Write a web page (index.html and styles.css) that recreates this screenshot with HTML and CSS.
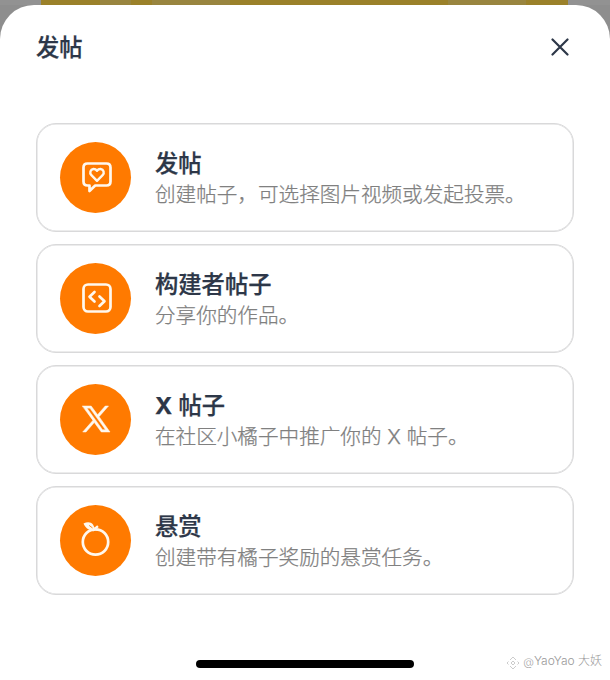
FILE: index.html
```html
<!DOCTYPE html>
<html lang="zh-CN">
<head>
<meta charset="utf-8">
<title>发帖</title>
<link rel="stylesheet" href="styles.css">
</head>
<body>
<div class="backdrop"></div>
<main class="sheet">
  <header class="header">
    <h1 class="heading">发帖</h1>
    <svg class="close" viewBox="0 0 18 18"><path d="M1.500 1.500l15 15M16.500 1.500l-15 15"/></svg>
  </header>
  <section class="options">
    <article class="card">
      <div class="badge">
        <svg class="icon" viewBox="0 0 36 36"><path d="M8.500 4.500h19q4 0 4 4v14q0 4-4 4h-11.300L10.500 32v-5.500h-2q-4 0-4-4v-14q0-4 4-4z"/><path class="thin" d="M18 21.800l-5.600-5.600c-2.200-2.200-1-5.900 2-6.200 1.500-.1 2.700.6 3.600 1.800.9-1.200 2.100-1.900 3.600-1.800 3 .3 4.200 4 2 6.200z"/></svg>
      </div>
      <div class="text"><h2 class="title">发帖</h2><p class="desc">创建帖子，可选择图片视频或发起投票。</p></div>
    </article>
    <article class="card">
      <div class="badge">
        <svg class="icon" viewBox="0 0 36 36"><rect x="4.500" y="4.500" width="27" height="27" rx="4.500"/><path d="M15.500 12l-5 4.700 5 4.800M20.500 16.500l5 4.700-5 4.800"/></svg>
      </div>
      <div class="text"><h2 class="title">构建者帖子</h2><p class="desc">分享你的作品。</p></div>
    </article>
    <article class="card">
      <div class="badge">
        <svg class="icon solid" viewBox="0 0 36 36"><path fill-rule="evenodd" d="M4.500 5h8.700l6.400 8.700L27.200 5h3.300L21.100 15.700 32 31h-8.700l-7-9.500L8 31H4.700l10.100-11.500zM9 7.300L24.500 28.700h3L12 7.300z"/></svg>
      </div>
      <div class="text"><h2 class="title"><span class="latin">X</span> 帖子</h2><p class="desc">在社区小橘子中推广你的 X 帖子。</p></div>
    </article>
    <article class="card">
      <div class="badge">
        <svg class="icon fruit" viewBox="0 0 36 36"><circle cx="17.500" cy="20" r="12.700"/><path class="leaf" d="M5.500 1.500C9.500-.4 13 .1 15 2.500l1.500 3 2.700-2.300 1.500 1.800-2.200 2 1.700 1.700-3.200-.3-2 1.100-1.200-1.400C10.200 8.400 7.500 5.500 5.500 1.500z"/><path class="vein" d="M11.500 3.700l2.700 2"/></svg>
      </div>
      <div class="text"><h2 class="title">悬赏</h2><p class="desc">创建带有橘子奖励的悬赏任务。</p></div>
    </article>
  </section>
  <div class="home"></div>
</main>
<div class="watermark">
  <svg class="mark" viewBox="0 0 14 14"><path d="M4 4l3-3 3 3M4 10l3 3 3-3M2.500 5.500L1 7l1.500 1.500M11.500 5.500L13 7l-1.500 1.500M7 5l2 2-2 2-2-2z"/></svg>
  <span class="at">@</span><span class="author">YaoYao 大妖</span>
</div>
</body>
</html>
```
FILE: styles.css
```css
* { box-sizing: border-box; }
body {
  margin: 0;
  height: 680px;
  overflow: hidden;
  background: #8e8e8e;
  font-family: Inter, "Noto Sans CJK SC", sans-serif;
  color: #2d3748;
}
.backdrop {
  height: 5px;
  background: linear-gradient(90deg, #929292 41px, #9b812a 41px 100px, #99853f 100px 131px, #9b812a 131px 152px, #99853f 152px 230px, #9b812a 230px 448px, #99853f 448px 526px, #9b812a 526px 568px, #929292 568px);
}
.sheet {
  height: 675px;
  padding: 0 36px;
  background: #fff;
  border-radius: 34px 34px 0 0;
  display: flex;
  flex-direction: column;
}
.header {
  height: 84px;
  display: flex;
  justify-content: space-between;
  align-items: center;
}
.heading, .title {
  margin: 0;
  font-size: 23.3px;
  line-height: 32px;
  font-weight: 500;
  -webkit-text-stroke: .25px;
}
.heading { padding-top: 2px; }
.latin { font-weight: 700; }
.close {
  width: 18px;
  height: 18px;
  margin-right: 5px;
  fill: none;
  stroke: #2d3748;
  stroke-width: 2.2;
  stroke-linecap: round;
}
.options {
  margin-top: 34px;
  display: flex;
  flex-direction: column;
  gap: 12px;
}
.card {
  height: 109px;
  padding-left: 23px;
  border: 1px solid #d9d9da;
  border-radius: 20px;
  box-shadow: inset 0 0 0 .5px #d9d9da;
  display: flex;
  align-items: center;
  gap: 24px;
}
.badge {
  width: 71px;
  height: 71px;
  border-radius: 50%;
  background: #ff7a00;
  display: flex;
  align-items: center;
  justify-content: center;
}
.icon {
  width: 36px;
  height: 36px;
  margin-left: 2px;
  margin-bottom: 1px;
  fill: none;
  stroke: #fff8ee;
  stroke-width: 2.7;
  stroke-linecap: round;
  stroke-linejoin: round;
}
.icon .thin { stroke-width: 2.4; }
.icon.solid { margin-left: 1px; fill: #fff8ee; stroke-width: .5; }
.icon.fruit { margin-left: 0; margin-bottom: 2px; }
.icon .leaf { fill: #fff8ee; stroke: none; }
.icon .vein { stroke: #ff7a00; stroke-width: .9; }
.text { padding-top: 3px; }
.desc {
  margin: 0;
  font-size: 20.6px;
  line-height: 30px;
  font-weight: 300;
  color: #808080;
  -webkit-text-stroke: .25px;
  white-space: nowrap;
}
.home {
  width: 218px;
  height: 8px;
  margin: 65px auto 0;
  border-radius: 4px;
  background: #000;
}
.watermark {
  position: absolute;
  right: 8px;
  bottom: 9px;
  display: flex;
  align-items: center;
  font-size: 12px;
  line-height: 18px;
  font-weight: 300;
  color: #999;
}
.mark {
  width: 14px;
  height: 14px;
  margin: 4px 3px 0 0;
  fill: none;
  stroke: #ccc;
}
.at { margin-top: 3px; color: #aaa; font-size: 11px; }
```
